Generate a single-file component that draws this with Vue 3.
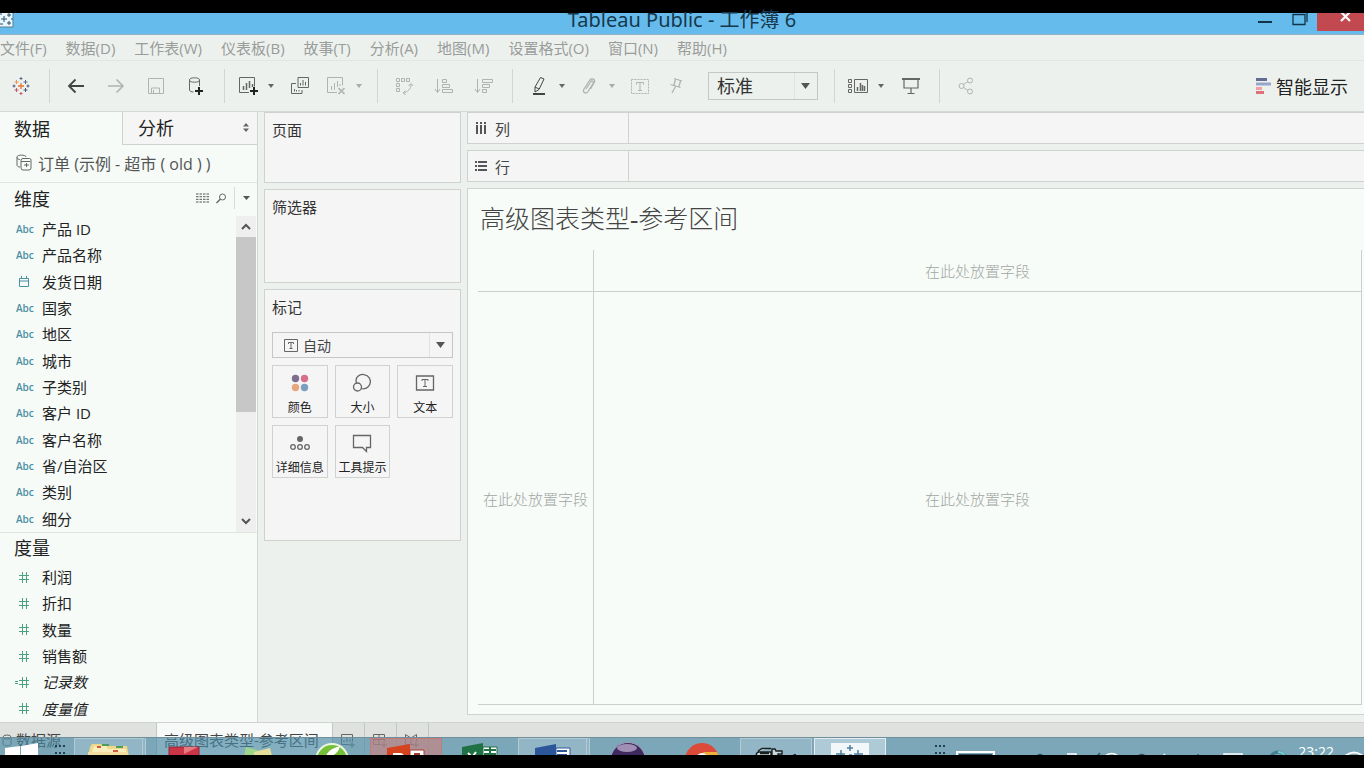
<template>
    <div class="screen">
        <div class="bezel"></div>
        <header class="title-bar">
            <svg class="app-icon" width="14" height="15" viewBox="0 0 14 15">
                <rect x="-1" y="-3" width="14" height="17" fill="#eaf6fb" stroke="#5b7f95" />
                <path d="M4 3v6M1 6h6M9 0v4M7 2h4M9 8v4M7 10h4M11 6h2M0 1h2M0 11h3" stroke="#24506c" />
            </svg>
            <h1>Tableau Public - 工作簿 6</h1>
            <div class="window-buttons">
                <button class="window-button" aria-label="最小化">
                    <svg width="16" height="18" viewBox="0 0 16 18"><path d="M1 9h14" stroke="#12344a" stroke-width="2" /></svg>
                </button>
                <button class="window-button" aria-label="还原">
                    <svg width="16" height="18" viewBox="0 0 16 18"><path d="M1 1.500h12v10H1zM15 0v9" fill="none" stroke="#12344a" stroke-width="1.300" /></svg>
                </button>
                <button class="window-button close" aria-label="关闭">
                    <svg width="16" height="18" viewBox="0 0 16 18"><path d="M4-1l9 9M13-1l-9 9" stroke="#fff" stroke-width="2.200" /></svg>
                </button>
            </div>
        </header>
        <nav class="menu-bar">
            <button v-for="menu in menus" :key="menu" class="menu-item">{{ menu }}</button>
        </nav>

        <!-- 工具栏 -->
        <div class="tool-bar">
            <button class="tool logo" aria-label="开始">
                <svg width="18" height="18" viewBox="0 0 18 18" fill="none">
                    <path d="M9 6v6M6 9h6" stroke="#e8762c" stroke-width="1.300" />
                    <path d="M4.500 3v4M2.500 5h4" stroke="#e8935c" />
                    <path d="M13.500 3v4M11.500 5h4M9 0v3M7.500 1.500h3" stroke="#5b6591" />
                    <path d="M4.500 11v4M2.500 13h4M9 15v3M7.500 16.500h3" stroke="#c35b63" />
                    <path d="M13.500 11v4M11.500 13h4M16 7.500v3M14.500 9h3M2 7.500v3M.5 9h3" stroke="#4d5580" />
                </svg>
            </button>
            <i class="separator"></i>
            <button class="tool" aria-label="撤消">
                <svg width="18" height="16" viewBox="0 0 18 16" class="line strong"><path d="M17 8H2M8.500 1.500L2 8l6.500 6.500" stroke-width="1.800" /></svg>
            </button>
            <button class="tool" aria-label="重做" disabled>
                <svg width="18" height="16" viewBox="0 0 18 16" class="line faint"><path d="M1 8h15M9.500 1.500L16 8l-6.500 6.500" stroke-width="1.600" /></svg>
            </button>
            <button class="tool" aria-label="保存" disabled>
                <svg width="18" height="18" viewBox="0 0 18 18" class="line faint"><path d="M1.500 1.500h15v15h-15zM4.500 16v-5h8v5M6.500 13v3" /></svg>
            </button>
            <button class="tool" aria-label="新建数据源">
                <svg width="18" height="20" viewBox="0 0 18 20" class="line">
                    <ellipse cx="7.500" cy="4" rx="5" ry="2.200" />
                    <path d="M2.500 4v10c0 1.300 2 2 4 2M12.500 4v6" />
                    <path d="M12 11v8M8 15h8" stroke="#222" stroke-width="2" />
                </svg>
            </button>
            <i class="separator"></i>
            <div class="split">
                <button class="split-main" aria-label="新建工作表">
                    <svg width="20" height="20" viewBox="0 0 20 20" class="line">
                        <path d="M11 16.500H1.500v-15h15v9" />
                        <path d="M5.500 10v4M8.500 7v7M11.500 5v7M14.500 8v3" stroke-width="1.500" />
                        <path d="M16 11v8M12 15h8" stroke="#222" stroke-width="2" />
                    </svg>
                </button>
                <button class="split-caret" aria-label="更多新建选项"><svg width="6" height="4" viewBox="0 0 6 4"><path d="M0 0h6L3 4z" fill="#666" /></svg></button>
            </div>
            <button class="tool medium" aria-label="复制工作表">
                <svg width="18" height="18" viewBox="0 0 18 18" class="line">
                    <path d="M7 .5h10.500v10H7zM5 6.500H.5v10h10.500V13" />
                    <path d="M9.500 6v2.500M12 3v5.500M14.500 5v3.500M3.500 12v2.500M5.500 13v1.500M8 13v1.500" />
                </svg>
            </button>
            <div class="split">
                <button class="split-main" aria-label="清除工作表" disabled>
                    <svg width="20" height="20" viewBox="0 0 20 20" class="line faint">
                        <path d="M11 16.500H1.500v-15h15v8M5.500 10v4M8.500 7v7M11.500 5v6M14 8v2" />
                        <path d="M12.500 12l6 6M18.500 12l-6 6" stroke-width="1.700" />
                    </svg>
                </button>
                <button class="split-caret" aria-label="更多清除选项" disabled><svg width="6" height="4" viewBox="0 0 6 4"><path d="M0 0h6L3 4z" fill="#aaa" /></svg></button>
            </div>
            <i class="separator"></i>
            <button class="tool" aria-label="交换行和列" disabled>
                <svg width="18" height="18" viewBox="0 0 18 18" class="line faint">
                    <path d="M1.500 1.500h3v3h-3zM6.500 1.500h3v3h-3zM11.500 1.500h3v3h-3zM1.500 6.500h3v3h-3zM1.500 11.500h3v3h-3z" />
                    <path d="M16 7c0 5-3 8-8 9M13.500 9L16 6.500 18 9M10.500 13.500L8 16l3 2" />
                </svg>
            </button>
            <button class="tool" aria-label="升序排序" disabled>
                <svg width="20" height="18" viewBox="0 0 20 18" class="line faint"><path d="M3.500 2v13M1 12l2.500 3.500L6 12M8.500 2.500h4v3h-4zM8.500 7.500h7v3h-7zM8.500 12.500h10v3h-10z" /></svg>
            </button>
            <button class="tool" aria-label="降序排序" disabled>
                <svg width="20" height="18" viewBox="0 0 20 18" class="line faint"><path d="M3.500 2v13M1 12l2.500 3.500L6 12M8.500 2.500h10v3h-10zM8.500 7.500h7v3h-7zM8.500 12.500h4v3h-4z" /></svg>
            </button>
            <i class="separator"></i>
            <div class="split first-mark">
                <button class="split-main" aria-label="突出显示">
                    <svg width="16" height="20" viewBox="0 0 16 20" class="line strong"><path d="M9.500 1.500l3.500 1.500-5 10.500L4 16v-5zM4 11l4 2" /><path d="M2 18h12" stroke-width="2" /></svg>
                </button>
                <button class="split-caret" aria-label="突出显示选项"><svg width="6" height="4" viewBox="0 0 6 4"><path d="M0 0h6L3 4z" fill="#666" /></svg></button>
            </div>
            <div class="split">
                <button class="split-main" aria-label="组成员" disabled>
                    <svg width="16" height="18" viewBox="0 0 16 18" class="line faint"><path d="M5 12l4.500-7c1.500-2 3.500-.5 2.500 1.500l-5 8c-2 3-6 1-4-2.500l5.500-8.500c2.500-3.500 6.500-1 4.500 2.500L9.500 12" stroke-width="1.300" /></svg>
                </button>
                <button class="split-caret" aria-label="组选项" disabled><svg width="6" height="4" viewBox="0 0 6 4"><path d="M0 0h6L3 4z" fill="#aaa" /></svg></button>
            </div>
            <button class="tool tight" aria-label="显示标记标签" disabled>
                <svg width="18" height="17" viewBox="0 0 18 17" class="line faint"><rect x=".5" y="1.500" width="17" height="14" stroke-dasharray="2 1" /><path d="M5.500 6.500v-2h7v2M9 4.500v8M7 12.500h4" /></svg>
            </button>
            <button class="tool tight" aria-label="固定轴" disabled>
                <svg width="14" height="18" viewBox="0 0 14 18" class="line faint"><path d="M5 1.500l8 2.500M6.500 2L5 8M11.500 4L10 9.500M1.500 7.500l10 3M6.500 9.500L3 16" stroke-width="1.300" /></svg>
            </button>
            <span class="fit">
                <select aria-label="适合" v-model="fit">
                    <option>标准</option>
                    <option>整个视图</option>
                </select>
                <svg class="select-caret" width="9" height="6" viewBox="0 0 9 6"><path d="M0 0h9L4.500 6z" fill="#555" /></svg>
            </span>
            <i class="separator"></i>
            <div class="split">
                <button class="split-main" aria-label="显示/隐藏功能区">
                    <svg width="22" height="16" viewBox="0 0 22 16" class="line"><path d="M1.500 1.500h3v3h-3zM1.500 6.500h3v3h-3zM1.500 11.500h3v3h-3zM7.500 1.500h13v13h-13z" /><path d="M10.500 9v4M13.500 5v8M15.500 7v6M17.500 8v5" stroke-width="1.500" /></svg>
                </button>
                <button class="split-caret" aria-label="功能区选项"><svg width="6" height="4" viewBox="0 0 6 4"><path d="M0 0h6L3 4z" fill="#666" /></svg></button>
            </div>
            <button class="tool" aria-label="演示模式">
                <svg width="18" height="18" viewBox="0 0 18 18" class="line"><path d="M0 2h18" stroke-width="2" /><path d="M2 3v8h14V3M9 11v5M5.500 16.500h7" stroke-width="1.200" /></svg>
            </button>
            <i class="separator"></i>
            <button class="tool" aria-label="共享" disabled>
                <svg width="16" height="18" viewBox="0 0 16 18" class="line faint"><circle cx="3.500" cy="9" r="2.500" /><circle cx="12" cy="3.500" r="2.500" /><circle cx="12" cy="14.500" r="2.500" /><path d="M5.500 7.500l4.500-3M5.500 10.500l4.500 3" /></svg>
            </button>
            <button class="show-me">
                <svg width="15" height="17" viewBox="0 0 15 17"><path d="M0 0h11v3H0z" fill="#656c8f" /><path d="M0 4.500h15v3H0z" fill="#95a6ca" /><path d="M0 9h6v3H0z" fill="#f0a0a4" /><path d="M0 13h8v3H0z" fill="#dd727c" /></svg>
                智能显示
            </button>
        </div>

        <main class="workspace">
            <!-- 数据窗格 -->
            <aside class="data-pane">
                <div class="pane-tabs">
                    <button class="pane-tab active">数据</button>
                    <button class="pane-tab">
                        分析
                        <svg width="6" height="9" viewBox="0 0 6 9"><path d="M0 3.500L3 0l3 3.500zM0 5.500L3 9l3-3.500z" fill="#666" /></svg>
                    </button>
                </div>
                <button class="source">
                    <svg width="16" height="17" viewBox="0 0 16 17" class="line"><path d="M4 13C2 13 1 12 1 11V3c0-2.500 9-2.500 9 0M4 5.500c-1 0-3-.5-3-2M7 4.500h6.500q1.500 0 1.500 1.500v8q0 2-2 2H7q-2 0-2-2V6.500q0-2 2-2zM5 7.500h9M8 11h5M10.500 9v4" /></svg>
                    订单 (示例 - 超市 ( old ) )
                </button>
                <div class="section-head">
                    <h2>维度</h2>
                    <button class="mini" aria-label="查看数据"><svg width="13" height="10" viewBox="0 0 13 10"><path d="M0 1h13M0 3.700h13M0 6.300h13M0 9h13" stroke="#555" stroke-dasharray="2.500 1" /></svg></button>
                    <button class="mini" aria-label="查找字段"><svg width="11" height="11" viewBox="0 0 11 11" class="line"><circle cx="6.500" cy="4" r="3" /><path d="M4.500 6L.5 10" stroke-width="1.400" /></svg></button>
                    <button class="mini last" aria-label="窗格选项"><svg width="7" height="4" viewBox="0 0 7 4"><path d="M0 0h7L3.500 4z" fill="#555" /></svg></button>
                </div>
                <div class="dimension-box">
                    <ul class="field-list">
                        <li v-for="field in dimensions" :key="field.name">
                            <span v-if="field.type === 'text'" class="abc">Abc</span>
                            <span v-else class="field-icon">
                                <svg width="12" height="11" viewBox="0 0 12 11"><path d="M1.500 2.500h9v8h-9zM1 5h10M3.500 0v3M8.500 0v3" fill="none" stroke="#4b8fa3" /></svg>
                            </span>
                            {{ field.name }}
                        </li>
                    </ul>
                    <div class="scroll">
                        <button class="scroll-button" aria-label="向上滚动"><svg width="10" height="7" viewBox="0 0 10 7"><path d="M1 6l4-4 4 4" fill="none" stroke="#555" stroke-width="2" /></svg></button>
                        <div class="track"><div class="thumb"></div></div>
                        <button class="scroll-button" aria-label="向下滚动"><svg width="10" height="7" viewBox="0 0 10 7"><path d="M1 1l4 4 4-4" fill="none" stroke="#555" stroke-width="2" /></svg></button>
                    </div>
                </div>
                <div class="section-head measure-head"><h2>度量</h2></div>
                <ul class="field-list">
                    <li v-for="field in measures" :key="field.name" :class="{ generated: field.generated }">
                        <span class="field-icon">
                            <svg width="18" height="11" viewBox="0 0 18 11" fill="none" stroke="#4aa283">
                                <path d="M4 3.500h10M4 7.500h10M7.500 0v11M11.500 0v11" />
                                <path v-if="field.calculated" d="M0 4.500h3M0 6.500h3" />
                            </svg>
                        </span>
                        {{ field.name }}
                    </li>
                </ul>
            </aside>

            <section class="cards">
                <div class="card pages"><h3>页面</h3></div>
                <div class="card filters"><h3>筛选器</h3></div>
                <div class="card marks">
                    <h3>标记</h3>
                    <div class="mark-type">
                        <svg class="mark-icon" width="14" height="13" viewBox="0 0 14 13"><path d="M.5.5h13v12H.5zM4.500 5V3.500h5V5M7 3.500v6M5.500 9.500h3" fill="none" stroke="#666" /></svg>
                        <select aria-label="标记类型" v-model="markType">
                            <option>自动</option>
                            <option>条形图</option>
                        </select>
                        <svg class="select-caret" width="9" height="6" viewBox="0 0 9 6"><path d="M0 0h9L4.500 6z" fill="#555" /></svg>
                    </div>
                    <div class="mark-buttons">
                        <button class="mark-button">
                            <svg width="20" height="20" viewBox="0 0 20 20"><circle cx="5.500" cy="5.500" r="3.700" fill="#7c6e8c" /><circle cx="14.500" cy="5.500" r="3.700" fill="#d9708b" /><circle cx="5.500" cy="14.500" r="3.700" fill="#e8a57e" /><circle cx="14.500" cy="14.500" r="3.700" fill="#7c9fc0" /></svg>
                            颜色
                        </button>
                        <button class="mark-button">
                            <svg width="20" height="20" viewBox="0 0 20 20" class="line"><path d="M4.500 10C2.500 4 8 .8 12 1.600c5 .8 7.500 5.400 6 9.400-1.500 4-5.500 5.500-9 4.500" stroke-width="1.300" /><circle cx="5.500" cy="14" r="4" stroke-width="1.300" /></svg>
                            大小
                        </button>
                        <button class="mark-button">
                            <svg width="20" height="20" viewBox="0 0 20 20" class="line"><path d="M1.500 3h17v14h-17z" stroke-width="1.300" /><path d="M7 8V6.500h6V8M10 6.500v7M8 13.500h4" /></svg>
                            文本
                        </button>
                        <button class="mark-button">
                            <svg width="20" height="20" viewBox="0 0 20 20" class="line"><circle cx="10" cy="6" r="3" fill="#666" stroke="none" /><circle cx="3" cy="14" r="2.300" stroke-width="1.300" /><circle cx="10" cy="14" r="2.300" stroke-width="1.300" /><circle cx="17" cy="14" r="2.300" stroke-width="1.300" /></svg>
                            详细信息
                        </button>
                        <button class="mark-button">
                            <svg width="20" height="20" viewBox="0 0 20 20" class="line"><path d="M1.500 2.500h17v12h-4v4l-4-4h-9z" stroke-width="1.300" /></svg>
                            工具提示
                        </button>
                    </div>
                </div>
            </section>

            <section class="sheet">
                <div class="shelf">
                    <div class="shelf-label">
                        <svg width="12" height="12" viewBox="0 0 12 12"><path d="M2 0v2M6 0v2M10 0v2M2 3v9M6 3v9M10 3v9" stroke="#555" stroke-width="2" /></svg>
                        列
                    </div>
                </div>
                <div class="shelf">
                    <div class="shelf-label">
                        <svg width="12" height="12" viewBox="0 0 12 12"><path d="M0 2h2M0 6h2M0 10h2M3 2h9M3 6h9M3 10h9" stroke="#555" stroke-width="2" /></svg>
                        行
                    </div>
                </div>
                <div class="canvas">
                    <h2 class="sheet-title">高级图表类型-参考区间</h2>
                    <div class="drop-grid">
                        <div class="drop corner"></div>
                        <div class="drop top">在此处放置字段</div>
                        <div class="drop left">在此处放置字段</div>
                        <div class="drop">在此处放置字段</div>
                    </div>
                </div>
            </section>
        </main>

        <!-- 工作表标签，底部被任务栏盖住一部分 -->
        <footer class="bottom">
            <div class="sheet-tabs">
                <button class="sheet-tab data-source">
                    <svg width="10" height="13" viewBox="0 0 10 13" class="line"><ellipse cx="5" cy="3" rx="4" ry="2" /><path d="M1 3v7c0 2.500 8 2.500 8 0V3" /></svg>
                    数据源
                </button>
                <button class="sheet-tab active">高级图表类型-参考区间</button>
                <button class="sheet-tab add" aria-label="新建工作表"><svg width="16" height="15" viewBox="0 0 16 15" class="line"><path d="M9 11.500H1.500v-10h11v7M4 9V7M7 9V5M10 9V6M12 9v6M9 12h6" /></svg></button>
                <button class="sheet-tab add" aria-label="新建仪表板"><svg width="16" height="15" viewBox="0 0 16 15" class="line"><path d="M9 11.500H1.500v-10h11v7M1 6.500h11M7 1v10M12 9v6M9 12h6" /></svg></button>
                <button class="sheet-tab add" aria-label="新建故事"><svg width="16" height="15" viewBox="0 0 16 15" class="line"><path d="M1.500 1.500L7 5l5.500-3.500v7M1.500 1.500v10H9M7 5v6M12 9v6M9 12h6" /></svg></button>
            </div>
            <div class="task-bar">
                <button class="start" aria-label="开始">
                    <svg width="34" height="18" viewBox="0 0 34 18"><path d="M0 10l15-2v10H0zM16 8l17-3v13H16z" fill="#fff" /></svg>
                </button>
                <svg class="grip" width="12" height="18" viewBox="0 0 12 18"><path d="M1 8h11M1 15h11" stroke="#243f4e" stroke-width="2" stroke-dasharray="2 2" /></svg>
                <button class="task framed stacked" aria-label="文件资源管理器">
                    <svg width="42" height="18" viewBox="0 0 42 18"><path d="M2 8l2-3h9l2 2h24l2 11H0z" fill="#eed889" /><path d="M6 7h12l2 3h18v3H4z" fill="#f9eebc" /><path d="M14 6h7M28 8h7" stroke="#4e9b5b" stroke-width="2" /><path d="M9 8h4M25 12h5" stroke="#d25a3d" stroke-width="2" /><path d="M0 13h40v5H0z" fill="#f3dda0" /></svg>
                </button>
                <button class="task" aria-label="红色应用">
                    <svg width="32" height="18" viewBox="0 0 32 18"><path d="M1 9h30v9H1z" fill="#ca3547" stroke="#8e2938" /><path d="M16 9h14L16 16z" fill="#e77a81" /></svg>
                </button>
                <button class="task" aria-label="图片">
                    <svg width="36" height="18" viewBox="0 0 36 18"><path d="M6 9l14 4 10 5H4z" fill="#9fd58b" /><path d="M14 14l16-4 2 8H14z" fill="#e4df9c" /></svg>
                </button>
                <button class="task" aria-label="浏览器">
                    <svg width="36" height="18" viewBox="0 0 36 18"><circle cx="18" cy="22" r="16" fill="#75bf3a" stroke="#ebf5df" stroke-width="2" /><path d="M12 18c2-6 8-8 14-10-1 5-4 8-8 10z" fill="#fff" /></svg>
                </button>
                <button class="task framed alert" aria-label="PowerPoint">
                    <svg width="38" height="18" viewBox="0 0 38 18"><path d="M0 9l23-4v13H0z" fill="#d6431f" /><path d="M23 11h14v7H23z" fill="#fff" stroke="#a83d2b" /><path d="M7 18v-3h6q3 0 3 3" fill="none" stroke="#fff" stroke-width="2" /><path d="M28 18v-3h4v3" fill="none" stroke="#a83d2b" stroke-width="2" /></svg>
                </button>
                <button class="task" aria-label="Excel">
                    <svg width="38" height="18" viewBox="0 0 38 18"><path d="M1 9l21-4v13H1z" fill="#207245" /><path d="M22 9h14v9H22z" fill="#fff" stroke="#207245" /><path d="M23 12h12M23 16h12M29 9v9" stroke="#207245" stroke-width="2" /><path d="M7 15l3 3M15 14l-3 4" stroke="#fff" stroke-width="2" /></svg>
                </button>
                <button class="task framed stacked" aria-label="Word">
                    <svg width="38" height="18" viewBox="0 0 38 18"><path d="M1 9l21-4v13H1z" fill="#2b579a" /><path d="M22 9h14v9H22z" fill="#fff" stroke="#2b579a" /><path d="M23 12h10M23 16h10" stroke="#2b579a" stroke-width="2" /></svg>
                </button>
                <button class="task" aria-label="Eclipse">
                    <svg width="38" height="18" viewBox="0 0 38 18"><circle cx="19" cy="22" r="17.500" fill="#3e2a5e" stroke="#a9a3c0" /><ellipse cx="18" cy="10" rx="10" ry="4" fill="#9f8fb5" /></svg>
                </button>
                <button class="task" aria-label="Chrome">
                    <svg width="34" height="18" viewBox="0 0 34 18"><circle cx="17" cy="22" r="17" fill="#dc4b3a" /><path d="M18 14h14l2 4H20z" fill="#f0b03e" /><circle cx="17" cy="21" r="6" fill="#fff" /></svg>
                </button>
                <button class="task framed" aria-label="录屏">
                    <svg width="44" height="18" viewBox="0 0 44 18"><path d="M2 18c0-4 1-5 3-5h12v5M4 12l4-2.500h9M6 14.500h9M18 18v-8h3l1 2h6v3h-4v3" fill="#c8d8dd" stroke="#1a1f22" stroke-width="1.400" /><path d="M36 18l5-2 1 2" fill="none" stroke="#1a1f22" stroke-width="2" /></svg>
                </button>
                <button class="task framed current" aria-label="Tableau">
                    <svg width="38" height="18" viewBox="0 0 38 18"><path d="M0 4h38v14H0z" fill="#f2f8fa" /><path d="M19 6v6M16 9h6M10 11v7M5 15h9M27 11v7M23 15h9M18 16h3" stroke="#4d7f9f" stroke-width="1.500" /></svg>
                </button>
                <div class="tray">
                    <svg width="12" height="18" viewBox="0 0 12 18"><path d="M1 8h11M1 15h11" stroke="#243f4e" stroke-width="2" stroke-dasharray="2 2" /></svg>
                    <svg width="40" height="18" viewBox="0 0 40 18"><path d="M1 19v-5h37v5" fill="none" stroke="#fff" stroke-width="2" /><path d="M3 18v-2h33v2" fill="#304b58" /></svg>
                    <svg class="tray-icons" width="212" height="18" viewBox="0 0 212 18" fill="none" stroke="#fff" stroke-width="1.500"><path d="M1 18q3-3 6 0M61 18l3-3M102 18q4-3 7 0M162 18v-2" stroke="#37515e" /><path d="M31 16h9v2M69 18q7-5 13 0M127 18l2-2M188 18v-2h18v2" /></svg>
                    <svg width="20" height="18" viewBox="0 0 20 18"><circle cx="10" cy="22" r="8" fill="none" stroke="#457d92" stroke-width="3" /><path d="M10 14q5 0 7 4" fill="none" stroke="#73cfd0" stroke-width="2" /></svg>
                    <time>23:22</time>
                    <svg width="20" height="18" viewBox="0 0 20 18"><path d="M1 18q9-7 18 0" fill="none" stroke="#fff" stroke-width="2" /></svg>
                </div>
            </div>
        </footer>
        <div class="bezel"></div>
    </div>
</template>

<script setup>
import { ref } from 'vue';

const menus = ['文件(F)', '数据(D)', '工作表(W)', '仪表板(B)', '故事(T)', '分析(A)', '地图(M)', '设置格式(O)', '窗口(N)', '帮助(H)'];

const fit = ref('标准');
const markType = ref('自动');

const dimensions = ref([
    { name: '产品 ID', type: 'text' },
    { name: '产品名称', type: 'text' },
    { name: '发货日期', type: 'date' },
    { name: '国家', type: 'text' },
    { name: '地区', type: 'text' },
    { name: '城市', type: 'text' },
    { name: '子类别', type: 'text' },
    { name: '客户 ID', type: 'text' },
    { name: '客户名称', type: 'text' },
    { name: '省/自治区', type: 'text' },
    { name: '类别', type: 'text' },
    { name: '细分', type: 'text' }
]);

// generated 为系统自动生成的字段，用斜体显示
const measures = ref([
    { name: '利润' },
    { name: '折扣' },
    { name: '数量' },
    { name: '销售额' },
    { name: '记录数', generated: true, calculated: true },
    { name: '度量值', generated: true }
]);
</script>

<style>
body {
    margin: 0;
    background: #000;
}
</style>

<style scoped>
.screen {
    display: flex;
    flex-direction: column;
    min-height: 100vh;
    overflow: hidden;
    background: #edf1ee;
    color: #222;
    font-family: "Open Sans", "Noto Sans CJK SC", sans-serif;
    font-size: 15px;
}

.screen * {
    box-sizing: border-box;
}

h1, h2, h3, ul {
    margin: 0;
    padding: 0;
    font-weight: 400;
}

button, select {
    margin: 0;
    padding: 0;
    border: 0;
    border-radius: 0;
    background: none;
    color: inherit;
    font: inherit;
}

svg {
    display: block;
    flex: none;
}

.line {
    fill: none;
    stroke: #666;
}

.line.strong {
    stroke: #444;
}

.line.faint {
    stroke: #b0b4b1;
}

.bezel {
    height: 13px;
    flex: none;
    background: #000;
}

/* 标题栏 */
.title-bar {
    display: grid;
    grid-template-columns: 1fr auto 1fr;
    height: 22px;
    background: #65bcec;
    border-bottom: 1px solid #93b4c6;
}

.title-bar h1 {
    font-size: 20px;
    line-height: 14px;
    font-family: "Noto Sans", "Noto Sans CJK SC", sans-serif;
    color: #16384c;
}

.window-buttons {
    display: flex;
    justify-content: flex-end;
}

.window-button {
    display: flex;
    justify-content: center;
    width: 35px;
    height: 18px;
}

.window-button.close {
    width: 47px;
    padding-left: 8px;
    background: #c1494f;
}

.menu-bar {
    display: flex;
    gap: 19px;
    height: 26px;
    border-bottom: 1px solid #e2e6e3;
    color: #999c9a;
}

.menu-item {
    white-space: nowrap;
}

/* 工具栏 */
.tool-bar {
    display: flex;
    align-items: center;
    height: 51px;
    border-bottom: 1px solid #d5d9d6;
}

.tool,
.split-main,
.split-caret {
    display: flex;
    align-items: center;
    justify-content: center;
    height: 32px;
}

.tool {
    width: 40px;
}

.tool.medium {
    width: 38px;
}

.tool.tight {
    width: 36px;
}

.split {
    display: flex;
    padding-left: 4px;
}

.split.first-mark {
    padding-left: 7px;
}

.split-main {
    width: 26px;
}

.split-caret {
    width: 20px;
}

.separator {
    width: 1px;
    height: 34px;
    margin: 0 6px 0 8px;
    background: #d2d6d3;
}

.logo {
    width: 41px;
}

.fit,
.mark-type {
    position: relative;
    display: flex;
    align-items: center;
    border: 1px solid #c4c8c5;
}

.fit {
    width: 110px;
    height: 28px;
    margin: 0 8px 0 14px;
}

.fit select,
.mark-type select {
    appearance: none;
    width: 100%;
    height: 100%;
    outline: none;
}

.fit select {
    padding-left: 8px;
    font-size: 18px;
    color: #333;
}

.select-caret {
    position: absolute;
    right: 7px;
    pointer-events: none;
}

.show-me {
    display: flex;
    align-items: center;
    gap: 5px;
    margin-left: auto;
    padding-right: 16px;
    font-size: 18px;
}

.workspace {
    display: flex;
    flex: 1;
}

/* 数据窗格 */
.data-pane {
    display: grid;
    grid-template-rows: 33px 38px 33px 2fr 32px 1fr;
    flex: none;
    width: 258px;
    background: #f6fbf8;
    border-right: 1px solid #d3d7d4;
}

.pane-tabs {
    display: flex;
    font-size: 18px;
}

.pane-tab {
    display: flex;
    align-items: center;
    justify-content: space-between;
    flex: 1;
    padding: 0 8px 2px 15px;
    background: #f5f5f5;
    border-left: 1px solid #cfd3d0;
    border-bottom: 1px solid #cfd3d0;
}

.pane-tab.active {
    flex: none;
    width: 122px;
    padding-left: 14px;
    background: none;
    border: 0;
}

.source {
    display: flex;
    align-items: center;
    gap: 6px;
    padding: 0 0 2px 16px;
    border-bottom: 1px solid #e0e4e1;
    font-size: 16px;
    color: #555;
}

.section-head {
    display: flex;
    align-items: center;
    padding: 0 0 3px 14px;
}

.section-head h2 {
    flex: 1;
    font-size: 18px;
}

.mini {
    display: flex;
    align-items: center;
    justify-content: center;
    width: 19px;
    height: 22px;
}

.mini.last {
    width: 23px;
    margin-left: 3px;
    border-left: 1px solid #d8dcd9;
}

.dimension-box {
    display: flex;
}

.field-list {
    display: flex;
    flex-direction: column;
    flex: 1;
    list-style: none;
}

.field-list li {
    display: flex;
    align-items: center;
    flex: 1;
    line-height: 26px;
}

.abc,
.field-icon {
    width: 42px;
}

.abc {
    padding-left: 16px;
    font: 600 10px "Open Sans", sans-serif;
    color: #4b8fa3;
}

.field-icon {
    padding-left: 18px;
}

.measure-head {
    border-top: 1px solid #e0e4e1;
}

.measure-head + .field-list .field-icon {
    padding-left: 15px;
}

.generated {
    font-style: italic;
}

.scroll {
    display: flex;
    flex-direction: column;
    width: 20px;
    margin-right: 1px;
    background: #efefef;
}

.scroll-button {
    display: flex;
    align-items: center;
    justify-content: center;
    height: 21px;
}

.track {
    flex: 1;
}

.thumb {
    height: 64%;
    background: #c6c7c6;
}

/* 功能区卡片 */
.cards {
    display: flex;
    flex-direction: column;
    flex: none;
    gap: 6px;
    width: 197px;
    margin: 0 6px;
}

.card {
    padding: 7px;
    background: #f5f5f5;
    border: 1px solid #cfd3d0;
}

.card h3 {
    font-size: 15px;
    line-height: 20px;
    color: #333;
}

.pages {
    min-height: 71px;
}

.filters {
    min-height: 94px;
}

.marks {
    min-height: 252px;
}

.mark-type {
    height: 26px;
    margin: 15px 0 7px;
}

.mark-type select {
    padding-left: 30px;
    font-size: 14px;
    color: #444;
}

.fit::after,
.mark-type::after {
    content: "";
    position: absolute;
    right: 22px;
    top: 0;
    bottom: 0;
    border-left: 1px solid #dfe3e0;
}

.mark-icon {
    position: absolute;
    left: 11px;
    pointer-events: none;
}

.mark-buttons {
    display: grid;
    grid-template-columns: repeat(3, 1fr);
    gap: 7px;
}

.mark-button {
    display: flex;
    flex-direction: column;
    align-items: center;
    gap: 6px;
    height: 53px;
    padding-top: 7px;
    border: 1px solid #cfd3d0;
    font-size: 12px;
    line-height: 18px;
    white-space: nowrap;
}

/* 行列功能区与视图 */
.sheet {
    display: flex;
    flex-direction: column;
    flex: 1;
    gap: 6px;
    padding-bottom: 7px;
}

.shelf {
    display: flex;
    height: 32px;
    background: #f5f5f5;
    border: 1px solid #cfd3d0;
    border-right: 0;
}

.shelf-label {
    display: flex;
    align-items: center;
    gap: 8px;
    width: 161px;
    padding-left: 7px;
    border-right: 1px solid #cfd3d0;
    color: #444;
}

.canvas {
    display: flex;
    flex-direction: column;
    flex: 1;
    padding: 12px 2px 9px 10px;
    background: #f7fcf8;
    border: 1px solid #cfd3d0;
    border-right: 0;
}

.sheet-title {
    padding-left: 2px;
    font-size: 25px;
    font-weight: 300;
    line-height: 38px;
    color: #444;
    font-family: "Liberation Serif", "Noto Sans CJK SC", serif;
}

.drop-grid {
    display: grid;
    grid-template-columns: 116px 1fr;
    grid-template-rows: 42px 1fr;
    flex: 1;
    margin-top: 11px;
    border-right: 1px solid #ccd0cd;
    border-bottom: 1px solid #ccd0cd;
}

.drop {
    display: flex;
    align-items: center;
    justify-content: center;
    color: #a2a6a3;
    font-weight: 300;
}

.corner,
.left {
    border-right: 1px solid #ccd0cd;
}

.corner,
.top {
    border-bottom: 1px solid #ccd0cd;
}

/* 底部标签与任务栏 */
.bottom {
    position: relative;
}

.sheet-tabs {
    display: flex;
    height: 33px;
    background: #dfe1df;
    border-top: 1px solid #cfd2cf;
    color: #444;
}

.sheet-tab {
    display: flex;
    align-items: center;
    justify-content: center;
    padding: 2px 7px 0;
    border-right: 1px solid #c3c7c4;
    line-height: 20px;
    white-space: nowrap;
}

.sheet-tab.data-source {
    justify-content: flex-start;
    gap: 4px;
    width: 157px;
    padding-left: 2px;
}

.sheet-tab.active {
    padding-right: 13px;
    background: #f7f9f8;
}

.sheet-tab.add {
    width: 32px;
}

.task-bar {
    position: absolute;
    left: 0;
    right: 0;
    bottom: 0;
    display: flex;
    gap: 2px;
    height: 18px;
    overflow: hidden;
    background: rgba(72, 137, 164, 0.66);
    border-top: 1px solid #6f8f9d;
}

.start {
    width: 46px;
    padding-left: 5px;
}

.grip {
    margin: 0 6px;
}

.task {
    display: flex;
    justify-content: center;
    flex: none;
    width: 72px;
}

.framed {
    background: rgba(200, 220, 228, 0.3);
    border: 1px solid #b3cad3;
    border-bottom: 0;
}

.stacked {
    border-right: 4px double #b3cad3;
}

.alert {
    background: rgba(226, 120, 110, 0.5);
    border-color: #c47a79;
}

.current {
    background: rgba(225, 238, 243, 0.5);
    border-color: #e3eef2;
}

.tray {
    display: flex;
    gap: 10px;
    margin-left: auto;
}

.tray svg:first-child {
    margin-left: -6px;
}

.tray-icons {
    margin: 0 10px 0 30px;
}

.tray time {
    font-size: 14px;
    line-height: 28px;
    color: #fff;
}
</style>
